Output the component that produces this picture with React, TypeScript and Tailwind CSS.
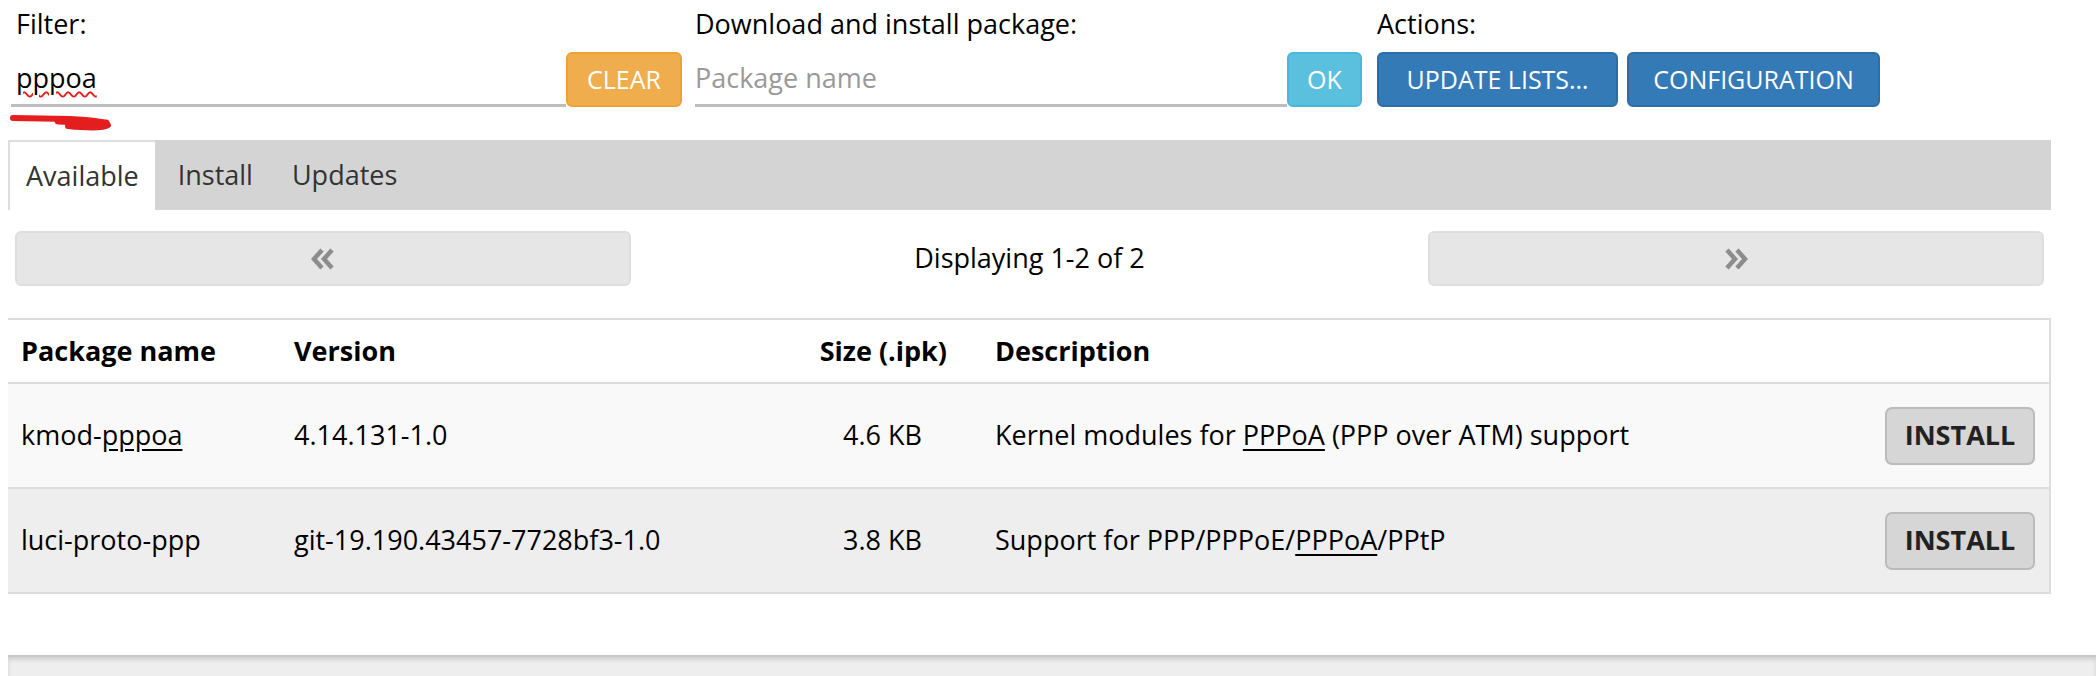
import { FC } from 'react'

const font = { fontFamily: '"Open Sans", "Noto Sans", sans-serif' }

const Chevrons: FC<{ dir: 'left' | 'right' }> = ({ dir }) => (
  <svg width="26" height="22" viewBox="0 0 26 22" className={dir === 'right' ? 'rotate-180' : ''}>
    <polyline points="12,2 4,11 12,20" fill="none" stroke="#8c8c8c" strokeWidth="4.5" />
    <polyline points="22,2 14,11 22,20" fill="none" stroke="#8c8c8c" strokeWidth="4.5" />
  </svg>
)

const rows = [
  {
    name: (
      <>
        kmod-<span className="underline underline-offset-4">pppoa</span>
      </>
    ),
    version: '4.14.131-1.0',
    size: '4.6 KB',
    desc: (
      <>
        Kernel modules for <span className="underline underline-offset-4">PPPoA</span> (PPP over ATM) support
      </>
    ),
    bg: 'bg-[#f9f9f9]',
  },
  {
    name: <>luci-proto-ppp</>,
    version: 'git-19.190.43457-7728bf3-1.0',
    size: '3.8 KB',
    desc: (
      <>
        Support for PPP/PPPoE/<span className="underline underline-offset-4">PPPoA</span>/PPtP
      </>
    ),
    bg: 'bg-[#eeeeee]',
  },
]

export default function App() {
  return (
    <div className="w-[2096px] h-[676px] overflow-hidden bg-white text-black text-[27px]" style={font}>
      <div className="pl-[8px] pr-[45px]">
        {/* top controls */}
        <div className="flex pt-[6px]">
          <div className="w-[674px] flex flex-col pl-[3px]">
            <div className="h-[36px] leading-[36px] pl-[5px]">Filter:</div>
            <div className="mt-[10px] flex h-[55px]">
              <div className="flex-1 flex items-center pl-[5px] border-b-[3px] border-[#bdbdbd] h-[55px]">
                <span className="underline decoration-wavy decoration-[#e02020] decoration-[1.5px] underline-offset-[3px]">pppoa</span>
              </div>
              <button className="w-[116px] h-[55px] rounded-[6px] bg-[#f0ad4e] border-2 border-[#eea236] text-white text-[25px]">
                CLEAR
              </button>
            </div>
            <svg width="110" height="33" viewBox="0 0 110 33" className="-ml-[3px]">
              <path d="M5 11 L62 12 C80 13 98 14 100 18 C96 21 80 21 60 19" fill="none" stroke="#e41e1e" strokeWidth="6" strokeLinecap="round" strokeLinejoin="round" />
              <path d="M50 14 L98 16" fill="none" stroke="#e41e1e" strokeWidth="7" strokeLinecap="round" />
            </svg>
          </div>
          <div className="w-[667px] ml-[13px] flex flex-col">
            <div className="h-[36px] leading-[36px]">Download and install package:</div>
            <div className="mt-[10px] flex h-[55px]">
              <div className="flex-1 flex items-center border-b-[3px] border-[#bdbdbd] text-[#999]">Package name</div>
              <button className="w-[75px] h-[55px] rounded-[6px] bg-[#5bc0de] border-2 border-[#46b8da] text-white text-[25px]">
                OK
              </button>
            </div>
          </div>
          <div className="ml-[15px] flex flex-col">
            <div className="h-[36px] leading-[36px]">Actions:</div>
            <div className="mt-[10px] flex gap-[9px] h-[55px]">
              <button className="w-[241px] h-[55px] rounded-[6px] bg-[#337ab7] border-2 border-[#2e6da4] text-white text-[25px]">
                UPDATE LISTS…
              </button>
              <button className="w-[253px] h-[55px] rounded-[6px] bg-[#337ab7] border-2 border-[#2e6da4] text-white text-[25px]">
                CONFIGURATION
              </button>
            </div>
          </div>
        </div>

        {/* tabs */}
        <div className="h-[70px] bg-[#d4d4d4] flex items-stretch text-[#333]">
          <div className="bg-white border-l-2 border-t-2 border-[#dddddd] px-[16px] flex items-center">Available</div>
          <div className="px-[18px] ml-[5px] flex items-center">Install</div>
          <div className="px-[18px] ml-[3px] flex items-center">Updates</div>
        </div>

        {/* pager */}
        <div className="mt-[21px] px-[7px] grid grid-cols-[616px_1fr_616px] items-center">
          <div className="h-[55px] rounded-[6px] bg-[#e6e6e6] border-2 border-[#dedede] flex items-center justify-center">
            <Chevrons dir="left" />
          </div>
          <div className="text-center">Displaying 1-2 of 2</div>
          <div className="h-[55px] rounded-[6px] bg-[#e6e6e6] border-2 border-[#dedede] flex items-center justify-center">
            <Chevrons dir="right" />
          </div>
        </div>

        {/* table */}
        <div className="mt-[32px] border-t-2 border-r-2 border-[#dddddd]">
          <div className="h-[62px] grid grid-cols-[286px_480px_221px_1fr] items-center font-bold">
            <div className="pl-[13px]">Package name</div>
            <div>Version</div>
            <div className="text-right pr-[48px] whitespace-nowrap">Size (.ipk)</div>
            <div>Description</div>
          </div>
          {rows.map((r, i) => (
            <div
              key={i}
              className={`h-[105px] grid grid-cols-[286px_480px_221px_1fr_auto] items-center border-t-2 border-[#dddddd] ${r.bg}`}
            >
              <div className="pl-[13px]">{r.name}</div>
              <div className="whitespace-nowrap">{r.version}</div>
              <div className="text-right pr-[73px]">{r.size}</div>
              <div>{r.desc}</div>
              <div className="pr-[14px]">
                <button className="w-[150px] h-[58px] rounded-[7px] bg-[#d6d6d6] border-2 border-[#bbbbbb] font-bold text-[#222]">
                  INSTALL
                </button>
              </div>
            </div>
          ))}
          <div className="border-t-2 border-[#dddddd]" />
        </div>
      </div>

      {/* footer */}
      <div className="mt-[61px] ml-[8px] h-[40px] bg-[#eeeeee] border-t-2 border-[#c8c8c8] shadow-[inset_0_3px_4px_rgba(0,0,0,0.12)]" />
    </div>
  )
}
